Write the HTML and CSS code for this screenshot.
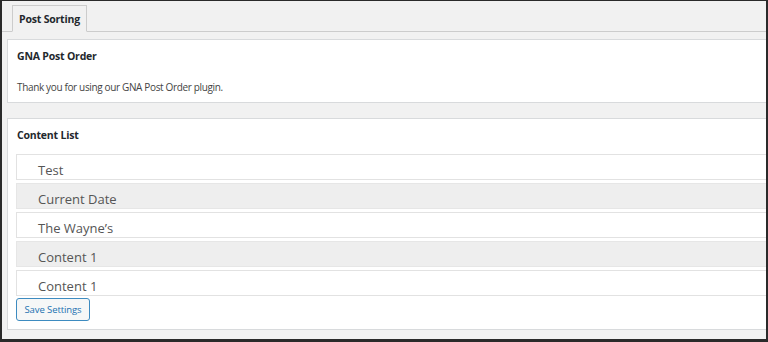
FILE: index.html
```html
<!DOCTYPE html>
<html>
<head>
<meta charset="utf-8">
<link rel="stylesheet" href="styles.css">
</head>
<body>
<div class="frame">
  <div class="tabs">
    <div class="tab">Post Sorting</div>
  </div>
  <div class="panel intro">
    <h2 class="panel-title">GNA Post Order</h2>
    <p class="panel-text">Thank you for using our GNA Post Order plugin.</p>
  </div>
  <div class="panel content">
    <h2 class="panel-title">Content List</h2>
    <ul class="list">
      <li class="item">Test</li>
      <li class="item alt">Current Date</li>
      <li class="item">The Wayne’s</li>
      <li class="item alt">Content 1</li>
      <li class="item">Content 1</li>
    </ul>
    <button class="btn">Save Settings</button>
  </div>
</div>
</body>
</html>
```
FILE: styles.css
```css
html, body {
  margin: 0;
  padding: 0;
}
body {
  font-family: "Open Sans", "Noto Sans", sans-serif;
  background: #fff;
}
.frame {
  width: 768px;
  height: 342px;
  box-sizing: border-box;
  border-style: solid;
  border-color: #2a2a2a;
  border-width: 1px 2px 3px 2px;
  background: #f1f1f1;
  overflow: hidden;
}
.tabs {
  display: flex;
  padding: 4px 0 0 10px;
  border-bottom: 1px solid #cccccc;
  height: 26px;
}
.tab {
  box-sizing: border-box;
  height: 27px;
  width: 75px;
  padding: 0;
  border: 1px solid #cccccc;
  border-bottom: 1px solid #f1f1f1;
  background: #f1f1f1;
  font-size: 10.5px;
  font-weight: 700;
  letter-spacing: -0.2px;
  color: #23282d;
  line-height: 26px;
  white-space: nowrap;
  text-align: center;
}
.panel {
  background: #fff;
  border: 1px solid #d8dadc;
  margin: 0 -30px 0 5px;
  padding: 0 9px;
}
.intro {
  margin-top: 7px;
  height: 62px;
}
.content {
  margin-top: 15px;
  height: 210px;
}
.panel-title {
  margin: 0;
  font-size: 10.5px;
  font-weight: 700;
  letter-spacing: -0.2px;
  color: #23282d;
  line-height: 16px;
  padding-top: 8px;
}
.panel-text {
  margin: 15px 0 0;
  font-size: 10px;
  letter-spacing: -0.35px;
  color: #444;
  line-height: 16px;
}
.list {
  list-style: none;
  margin: 11px 0 0 -1px;
  padding: 0;
}
.item {
  box-sizing: border-box;
  height: 26px;
  margin-bottom: 3px;
  border: 1px solid #e2e2e2;
  background: #fff;
  padding: 5px 0 0 21px;
  font-size: 13px;
  line-height: 20px;
  color: #555;
}
.item:last-child {
  margin-bottom: 2px;
}
.item.alt {
  background: #eeeeee;
  border-color: #e6e6e6;
}
.btn {
  display: block;
  margin: 0 0 0 -1px;
  box-sizing: border-box;
  height: 23px;
  width: 74px;
  padding: 0;
  border: 1px solid #3d8bc0;
  border-radius: 3px;
  background: #f6f7f7;
  color: #2271b1;
  font-family: "Open Sans", "Noto Sans", sans-serif;
  font-size: 9.5px;
  letter-spacing: -0.1px;
  line-height: 20px;
}
```
